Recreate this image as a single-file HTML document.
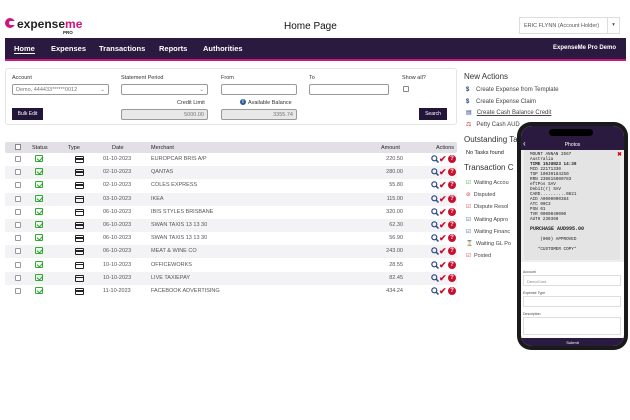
<!DOCTYPE html>
<html><head><style>
*{box-sizing:border-box;margin:0;padding:0}
body{width:630px;height:420px;overflow:hidden;background:#fff;font-family:"Liberation Sans",sans-serif;color:#444;position:relative}
.a{position:absolute}
.nav{left:5px;top:38px;width:621px;height:23px;background:#2a1a40;border-bottom:2px solid #d0137f}
.nav span{position:absolute;top:6px;color:#fff;font-size:7.5px;font-weight:bold}
.lbl{font-size:5.5px;color:#333}
.in{border:1px solid #999;border-radius:2px;height:11px;background:#fff;font-size:5.5px;color:#777;padding:2px 3px}
.th{left:5px;top:142px;width:452px;height:11px;background:#e2e0e6;border-radius:2px}
.row{left:5px;width:452px;height:13px;font-size:5.5px;color:#555}
.cb{position:absolute;left:10px;top:3px;width:6px;height:6px;border:1px solid #999;border-radius:1px;background:#fff}
.ok{position:absolute;left:30px;top:2px;width:8px;height:7px;border:1px solid #3a3;border-radius:1px}
.ok:after{content:"";position:absolute;left:2px;top:-1px;width:3px;height:5px;border:solid #2a2;border-width:0 1.5px 1.5px 0;transform:rotate(40deg)}
.card{position:absolute;left:70px;top:3px;width:9px;height:7px;border:1.5px solid #222;border-radius:1px}
.card:after{content:"";position:absolute;left:0;top:1px;width:100%;height:1.5px;background:#222}
.ic{position:absolute;top:2px;font-size:8px;font-weight:bold}
.ra{font-size:6px;color:#444}
</style></head><body>
<div class="a" style="left:5px;top:18px;width:10px;height:10px;border-radius:50%;background:#d0137f"></div>
<div class="a" style="left:9px;top:21px;width:6px;height:4px;background:#fff;border-radius:2px 0 0 2px"></div>
<div class="a" style="left:17px;top:17px;font-size:12px;font-weight:bold;color:#222">expense<span style="color:#d0137f">me</span></div>
<div class="a" style="left:63px;top:30px;font-size:4.5px;font-weight:bold;color:#222">PRO</div>
<div class="a" style="left:284px;top:21px;font-size:10px;color:#111">Home Page</div>
<div class="a" style="left:519px;top:17px;width:101px;height:17px;border:1px solid #ddd;font-size:5.5px;color:#555;padding:5px 0 0 4px">ERIC FLYNN (Account Holder)<span style="position:absolute;right:0;top:0;width:12px;height:15px;border-left:1px solid #ddd;text-align:center;padding-top:4px">&#9662;</span></div>
<div class="a nav"><span style="left:9px;border-bottom:1px solid #fff">Home</span><span style="left:46px">Expenses</span><span style="left:94px">Transactions</span><span style="left:154px">Reports</span><span style="left:198px">Authorities</span><span style="left:548px;top:7px;font-size:6px">ExpenseMe Pro Demo</span></div>
<div class="a" style="left:5px;top:68px;width:452px;height:57px;border:1px solid #e4e4e4;border-radius:3px"></div>
<div class="a lbl" style="left:12px;top:75px">Account</div>
<div class="a in" style="left:12px;top:84px;width:97px">Demo, 444433******0012<span style="float:right">&#8964;</span></div>
<div class="a lbl" style="left:121px;top:75px">Statement Period</div>
<div class="a in" style="left:121px;top:84px;width:87px"><span style="float:right">&#8964;</span></div>
<div class="a lbl" style="left:221px;top:75px">From</div>
<div class="a in" style="left:221px;top:84px;width:76px"></div>
<div class="a lbl" style="left:309px;top:75px">To</div>
<div class="a in" style="left:309px;top:84px;width:80px"></div>
<div class="a lbl" style="left:402px;top:75px">Show all?</div>
<div class="a" style="left:403px;top:86px;width:6px;height:6px;border:1px solid #888;border-radius:1px"></div>
<div class="a lbl" style="left:177px;top:100px">Credit Limit</div>
<div class="a" style="left:240px;top:99px;width:6px;height:6px;border-radius:50%;background:#2a5a9a;color:#fff;font-size:5px;font-weight:bold;text-align:center;line-height:6px">i</div>
<div class="a lbl" style="left:248px;top:100px">Available Balance</div>
<div class="a in" style="left:121px;top:109px;width:87px;background:#e8e8e8;text-align:right">5000.00</div>
<div class="a in" style="left:221px;top:109px;width:76px;background:#e8e8e8;text-align:right">3355.74</div>
<div class="a" style="left:12px;top:108px;width:31px;height:12px;background:#23143a;color:#fff;font-size:5px;text-align:center;padding-top:3px">Bulk Edit</div>
<div class="a" style="left:419px;top:108px;width:28px;height:12px;background:#23143a;color:#fff;font-size:5px;text-align:center;padding-top:3px">Search</div>
<div class="a th"></div>
<div class="a" style="left:15px;top:144px;width:6px;height:6px;border:1px solid #888;background:#fff"></div>
<div class="a" style="top:145px;left:32px;font-size:5.5px;color:#222">Status</div>
<div class="a" style="top:145px;left:68px;font-size:5.5px;color:#222">Type</div>
<div class="a" style="top:145px;left:112px;font-size:5.5px;color:#222">Date</div>
<div class="a" style="top:145px;left:151px;font-size:5.5px;color:#222">Merchant</div>
<div class="a" style="top:145px;left:381px;font-size:5.5px;color:#222">Amount</div>
<div class="a" style="top:145px;left:436px;font-size:5.5px;color:#222">Actions</div>
<div id="rows"></div>
<script>
var d=[["01-10-2023","EUROPCAR BRIS A/P","220.50"],["02-10-2023","QANTAS","280.00"],["02-10-2023","COLES EXPRESS","55.80"],["03-10-2023","IKEA","115.00"],["06-10-2023","IBIS STYLES BRISBANE","320.00"],["06-10-2023","SWAN TAXIS 13 13 30","62.30"],["06-10-2023","SWAN TAXIS 13 13 30","56.90"],["06-10-2023","MEAT & WINE CO","243.00"],["10-10-2023","OFFICEWORKS","28.55"],["10-10-2023","LIVE TAXIEPAY","82.45"],["11-10-2023","FACEBOOK ADVERTISING","434.24"]];
var mag='<svg class="a" style="left:426px;top:2px" width="8" height="8" viewBox="0 0 8 8"><circle cx="3.3" cy="3.3" r="2.5" fill="none" stroke="#2a4a8a" stroke-width="1.2"/><line x1="5.2" y1="5.2" x2="7.5" y2="7.5" stroke="#2a4a8a" stroke-width="1.5"/></svg>';
var h="";d.forEach(function(r,i){h+='<div class="a row" style="top:'+(153+i*13.2)+'px;background:'+(i%2?'#f3f3f5':'#fff')+'"><div class="cb"></div><div class="ok"></div><div class="card"></div><span class="a" style="left:98px;top:3px">'+r[0]+'</span><span class="a" style="left:146px;top:3px">'+r[1]+'</span><span class="a" style="right:54px;top:3px">'+r[2]+'</span>'+mag+'<span class="ic" style="left:434px;top:1px;color:#c8102e;font-size:9px">&#10004;</span><span class="ic" style="left:443px;top:2px;width:8px;height:8px;border-radius:50%;background:#c8102e;color:#fff;font-size:6px;text-align:center;line-height:8px">?</span></div>'});document.getElementById("rows").innerHTML=h;
</script>
<div class="a" style="left:464px;top:72px;font-size:8px;color:#333">New Actions</div>
<div class="a ra" style="left:466px;top:85px;line-height:11.5px"><span style="color:#1a3a8a;font-weight:bold">$</span>&nbsp;&nbsp;&nbsp;&nbsp;Create Expense from Template<br><span style="color:#1a3a8a;font-weight:bold">$</span>&nbsp;&nbsp;&nbsp;&nbsp;Create Expense Claim<br><span style="color:#1a3a8a">&#9636;</span>&nbsp;&nbsp;&nbsp;<u>Create Cash Balance Credit</u><br><span style="color:#c33">&#9878;</span>&nbsp;&nbsp;&nbsp;Petty Cash AUD</div>
<div class="a" style="left:464px;top:135px;font-size:8px;color:#333">Outstanding Ta</div>
<div class="a ra" style="left:466px;top:150px;font-size:5.5px;color:#222">No Tasks found</div>
<div class="a" style="left:464px;top:163px;font-size:8px;color:#333">Transaction C</div>
<div class="a ra" style="left:466px;top:177px;line-height:12.2px;font-size:5.5px"><span style="color:#3a3">&#9745;</span>&nbsp;&nbsp;Waiting Accou<br><span style="color:#c33">&#8856;</span>&nbsp;&nbsp;Disputed<br><span style="color:#c33">&#9745;</span>&nbsp;&nbsp;Dispute Resol<br><span style="color:#2a4a9a">&#9745;</span>&nbsp;&nbsp;Waiting Appro<br><span style="color:#2a4a9a">&#9745;</span>&nbsp;&nbsp;Waiting Financ<br><span style="color:#39c">&#8987;</span>&nbsp;&nbsp;Waiting GL Po<br><span style="color:#c33">&#9745;</span>&nbsp;&nbsp;Posted</div>
<div class="a" style="left:517px;top:122px;width:111px;height:228px;background:#1a1a1a;border-radius:14px"></div>
<div class="a" style="left:521px;top:126px;width:103px;height:220px;background:#fff;border-radius:11px;overflow:hidden">
<div class="a" style="left:0;top:0;width:103px;height:24px;background:#2a1a40;color:#fff;font-size:5px;text-align:center;padding-top:16px">Photos<span style="position:absolute;left:2px;top:13px;font-size:8px">&#8249;</span></div>
<div class="a" style="left:28px;top:3px;width:44px;height:7px;background:#000;border-radius:4px"></div>
<div class="a" style="left:0;top:24px;width:103px;height:112px;background:#eee"></div>
<div class="a" style="left:3px;top:24px;width:96px;height:110px;background:#e4e4e4;font-family:'Liberation Mono',monospace;font-size:4.3px;color:#222;padding:2px 6px;line-height:5px">MOUNT ANNAN 2567<br>Australia<br><b>TIME 15JUN23   14:30</b><br>MID        22171330<br>TSP     10039184250<br>RRN    230615000783<br>eftPos SAV<br>Debit(r)        SAV<br>CARD..........0821<br>AID    A0000000384<br>ATC            00C3<br>PSN              01<br>TVR    0000040000<br>AUTH       230360<br><br><b style="font-size:5px">PURCHASE   AUD995.00</b><br><br>&nbsp;&nbsp;&nbsp;&nbsp;(000) APPROVED<br><br>&nbsp;&nbsp;&nbsp;*CUSTOMER COPY*</div>
<div class="a" style="left:96px;top:25px;color:#c00;font-size:6px">&#10006;</div>
<div class="a" style="left:2px;top:144px;font-size:3.5px">Account</div>
<div class="a" style="left:2px;top:149px;width:98px;height:11px;border:1px solid #ddd;font-size:4px;color:#888;padding:3px">DemoCard</div>
<div class="a" style="left:2px;top:165px;font-size:3.5px">Expense Type</div>
<div class="a" style="left:2px;top:170px;width:98px;height:11px;border:1px solid #ddd"></div>
<div class="a" style="left:2px;top:186px;font-size:3.5px">Description</div>
<div class="a" style="left:2px;top:191px;width:98px;height:18px;border:1px solid #ddd"></div>
<div class="a" style="left:0;top:212px;width:103px;height:8px;background:#2a1a40;color:#fff;font-size:4px;text-align:center;padding-top:2px">Submit</div>
</div>
</body></html>
